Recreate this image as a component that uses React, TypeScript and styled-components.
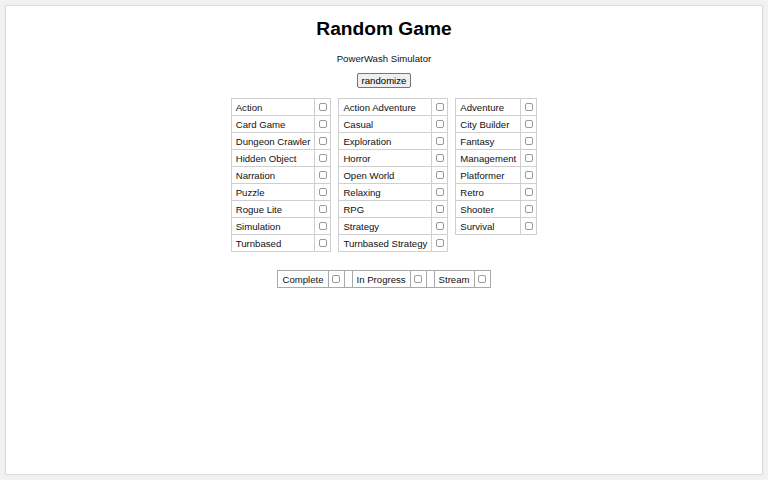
import React, { useState } from "react";
import styled, { createGlobalStyle } from "styled-components";

const GlobalStyle = createGlobalStyle`
  html, body {
    margin: 0;
    padding: 0;
    background: #f2f2f2;
    font-family: "Liberation Sans", Arial, sans-serif;
  }
`;

const Page = styled.div`
  padding: 5px;
  height: 480px;
  box-sizing: border-box;
`;

const Card = styled.main`
  height: 100%;
  box-sizing: border-box;
  background: #fff;
  border: 1px solid #dcdcdc;
  box-shadow: 0 0 2px rgba(0, 0, 0, 0.06);
  display: flex;
  flex-direction: column;
  align-items: center;
  padding-top: 12px;
`;

const Title = styled.h1`
  margin: 0;
  font-size: 19.2px;
  line-height: 22px;
  font-weight: 700;
  color: #000;
`;

const GameName = styled.p`
  margin: 13px 0 0;
  font-size: 9.6px;
  line-height: 11px;
  color: #111;
`;

const RandomButton = styled.button`
  margin-top: 9px;
  height: 15px;
  padding: 0 4px;
  font-family: inherit;
  font-size: 9.6px;
  line-height: 11px;
  color: #000;
  background: #efefef;
  border: 1px solid #767676;
  border-radius: 2px;
`;

const Grid = styled.table<{ $top: number; $line: string }>`
  margin-top: ${(p) => p.$top}px;
  border-collapse: collapse;
  font-size: 9.6px;
  color: #111;

  td {
    height: 17px;
    padding: 0 4px;
    border: 1px solid ${(p) => p.$line};
    box-sizing: border-box;
    white-space: nowrap;
  }
`;

const NameCell = styled.td`
  text-align: left;
`;

const BoxCell = styled.td`
  width: 16px;
  text-align: center;
  && {
    padding: 0 3px;
  }
`;

const Spacer = styled.td<{ $open?: boolean }>`
  && {
    width: 8px;
    padding: 0;
    border-left-color: #8a8a8a;
    ${(p) => (p.$open ? "border-top: none; border-bottom: none;" : "")}
  }
`;

const Check = styled.input.attrs({ type: "checkbox" })`
  appearance: none;
  display: block;
  margin: 0 auto;
  width: 8px;
  height: 8px;
  border: 1px solid #9a9a9a;
  border-radius: 2px;
  background: #fff;
  box-sizing: border-box;

  &:checked {
    background: #3b82f6;
    border-color: #3b82f6;
  }
`;

const genres = [
  ["Action", "Action Adventure", "Adventure"],
  ["Card Game", "Casual", "City Builder"],
  ["Dungeon Crawler", "Exploration", "Fantasy"],
  ["Hidden Object", "Horror", "Management"],
  ["Narration", "Open World", "Platformer"],
  ["Puzzle", "Relaxing", "Retro"],
  ["Rogue Lite", "RPG", "Shooter"],
  ["Simulation", "Strategy", "Survival"],
  ["Turnbased", "Turnbased Strategy"],
];

const statuses = ["Complete", "In Progress", "Stream"];

export default function App() {
  const [picked, setPicked] = useState<Record<string, boolean>>({});
  const toggle = (key: string) =>
    setPicked((prev) => ({ ...prev, [key]: !prev[key] }));

  const renderGroup = (labels: string[], open: boolean) =>
    labels.map((label, i) => (
      <React.Fragment key={label}>
        {i > 0 && <Spacer $open={open} />}
        <NameCell>{label}</NameCell>
        <BoxCell>
          <Check checked={!!picked[label]} onChange={() => toggle(label)} />
        </BoxCell>
      </React.Fragment>
    ));

  return (
    <>
      <GlobalStyle />
      <Page>
        <Card>
          <Title>Random Game</Title>
          <GameName>PowerWash Simulator</GameName>
          <RandomButton>randomize</RandomButton>
          <Grid $top={10} $line="#cfcfcf">
            <tbody>
              {genres.map((row) => (
                <tr key={row[0]}>{renderGroup(row, true)}</tr>
              ))}
            </tbody>
          </Grid>
          <Grid $top={18} $line="#a9a9a9">
            <tbody>
              <tr>{renderGroup(statuses, false)}</tr>
            </tbody>
          </Grid>
        </Card>
      </Page>
    </>
  );
}
